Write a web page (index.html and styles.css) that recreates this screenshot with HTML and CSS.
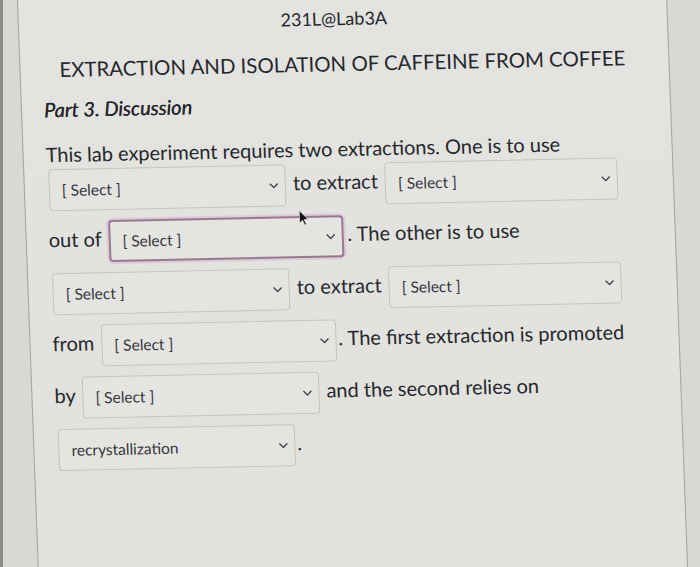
FILE: index.html
```html
<!DOCTYPE html>
<html>
<head>
<meta charset="utf-8">
<link rel="stylesheet" href="styles.css">
</head>
<body>
<div class="page">
  <div class="card">
    <div class="course">231L@Lab3A</div>
    <h1 class="title">EXTRACTION AND ISOLATION OF CAFFEINE FROM COFFEE</h1>
    <h2 class="part">Part 3. Discussion</h2>
    <p class="question">This lab experiment requires two extractions. One is to use <span class="sel w-a"><span class="val">[ Select ]</span><svg class="chev" viewBox="0 0 10 6"><path d="M1 1 L5 5 L9 1"/></svg></span> to extract <span class="sel w-b"><span class="val">[ Select ]</span><svg class="chev" viewBox="0 0 10 6"><path d="M1 1 L5 5 L9 1"/></svg></span> out of <span class="sel w-c focus"><span class="val">[ Select ]</span><svg class="chev" viewBox="0 0 10 6"><path d="M1 1 L5 5 L9 1"/></svg></span>. The other is to use <span class="sel w-a"><span class="val">[ Select ]</span><svg class="chev" viewBox="0 0 10 6"><path d="M1 1 L5 5 L9 1"/></svg></span> to extract <span class="sel w-b"><span class="val">[ Select ]</span><svg class="chev" viewBox="0 0 10 6"><path d="M1 1 L5 5 L9 1"/></svg></span> from <span class="sel w-c"><span class="val">[ Select ]</span><svg class="chev" viewBox="0 0 10 6"><path d="M1 1 L5 5 L9 1"/></svg></span>. The first extraction is promoted by <span class="sel w-a"><span class="val">[ Select ]</span><svg class="chev" viewBox="0 0 10 6"><path d="M1 1 L5 5 L9 1"/></svg></span> and the second relies on <span class="sel w-a"><span class="val">recrystallization</span><svg class="chev" viewBox="0 0 10 6"><path d="M1 1 L5 5 L9 1"/></svg></span>.</p>
    <svg class="cursor" viewBox="0 0 12 19"><path d="M0.5 0.5 L0.5 15.5 L4 12.2 L6.6 18 L8.6 17.1 L6.1 11.4 L10.8 11.4 Z"/></svg>
  </div>
</div>
</body>
</html>
```
FILE: styles.css
```css
html, body {
  margin: 0;
  padding: 0;
}
body {
  width: 700px;
  height: 567px;
  overflow: hidden;
  background: #d8d8d4;
  box-shadow: inset 3px 0 0 #8c8c89;
  font-family: Lato, "Open Sans", sans-serif;
  color: #26282c;
}
.page {
  transform: rotate(-1.2deg) skewX(0.9deg);
  transform-origin: 350px 283px;
}
.card {
  position: relative;
  margin: -40px 0 0 26px;
  width: 650px;
  height: 660px;
  box-sizing: border-box;
  padding-top: 48px;
  background: linear-gradient(#e3e3e0, #e1e1dc);
  border-left: 1px solid #a3a3a0;
  border-right: 1px solid #a3a3a0;
}
.course {
  font-size: 18px;
  line-height: 20px;
  text-align: center;
  padding-left: 0;
  padding-right: 18px;
}
.title {
  margin: 23px 0 0;
  font-size: 20.4px;
  line-height: 24px;
  font-weight: 400;
  text-align: center;
  padding-right: 4px;
}
.part {
  margin: 16px 0 0 22px;
  font-size: 20px;
  line-height: 24px;
  font-style: italic;
  font-weight: 400;
  text-shadow: 0.3px 0 0 currentColor;
}
.question {
  margin: 23px 0 0 22px;
  width: 592px;
  font-size: 20px;
  line-height: 20px;
}
.sel {
  display: inline-flex;
  align-items: center;
  justify-content: space-between;
  width: 237px;
  height: 42px;
  box-sizing: border-box;
  margin: 5px 2px 5px 2px;
  padding: 0 6px 0 12px;
  border: 1px solid #c4c4c0;
  border-radius: 4px;
  background: #e4e4e1;
  vertical-align: middle;
  font-size: 15.5px;
  line-height: 16px;
  color: #34363a;
}
.sel.w-b {
  width: 233px;
}
.sel.w-c {
  width: 235px;
}
.sel.focus {
  border: 2px solid #9a7891;
  box-shadow: 0 0 0 2px #dacbd5;
  margin-right: 4px;
}
.chev {
  width: 10px;
  height: 6px;
  fill: none;
  stroke: #44464a;
  stroke-width: 1.4;
}
.cursor {
  position: absolute;
  left: 273px;
  top: 249px;
  width: 10px;
  height: 16px;
  fill: #111;
  stroke: #e8e8e8;
  stroke-width: 0.8;
}
```
